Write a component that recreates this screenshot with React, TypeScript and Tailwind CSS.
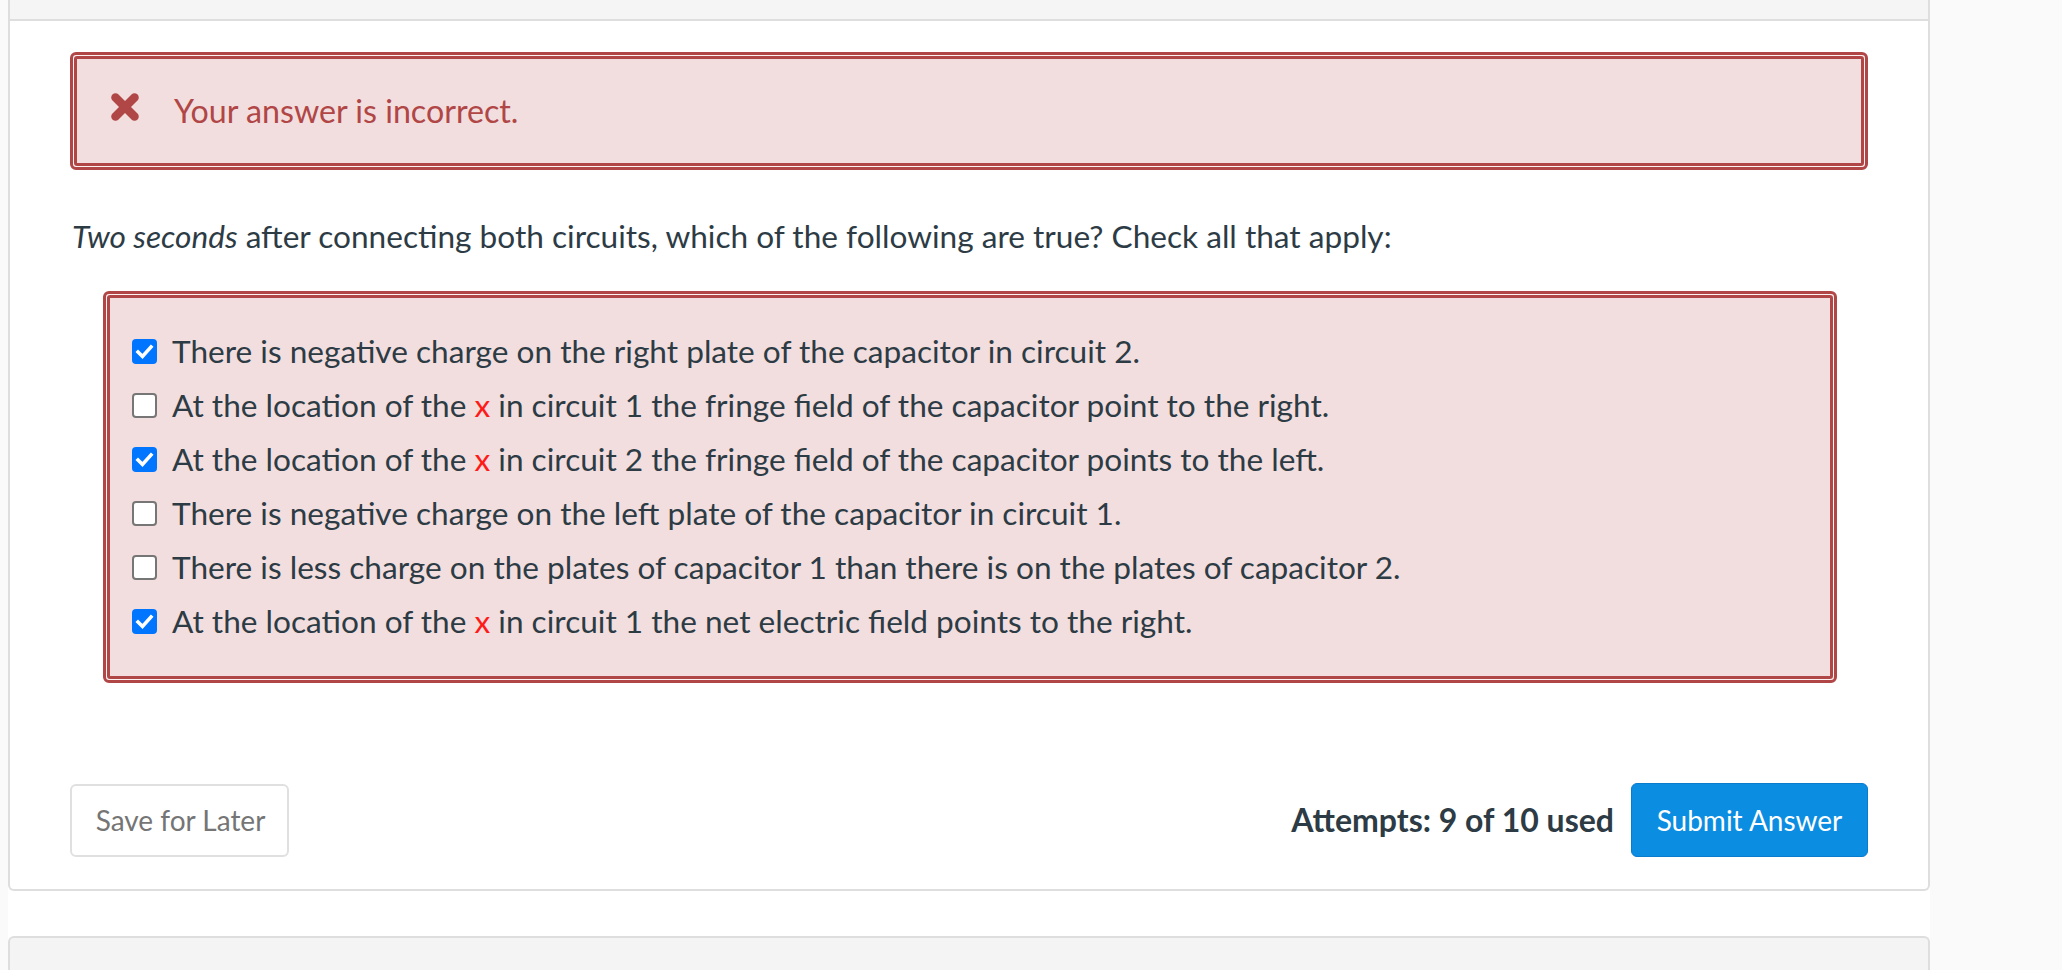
import React from "react";

const RedX = () => <span className="text-[#ff1a1a]">x</span>;

const options: { checked: boolean; content: React.ReactNode }[] = [
  { checked: true, content: <>There is negative charge on the right plate of the capacitor in circuit 2.</> },
  { checked: false, content: <>At the location of the <RedX /> in circuit 1 the fringe field of the capacitor point to the right.</> },
  { checked: true, content: <>At the location of the <RedX /> in circuit 2 the fringe field of the capacitor points to the left.</> },
  { checked: false, content: <>There is negative charge on the left plate of the capacitor in circuit 1.</> },
  { checked: false, content: <>There is less charge on the plates of capacitor 1 than there is on the plates of capacitor 2.</> },
  { checked: true, content: <>At the location of the <RedX /> in circuit 1 the net electric field points to the right.</> },
];

function Checkbox({ checked }: { checked: boolean }) {
  if (checked) {
    return (
      <span className="flex h-[25px] w-[25px] shrink-0 items-center justify-center rounded-[4px] bg-[#0075ff]">
        <svg width="25" height="25" viewBox="0 0 25 25">
          <polyline points="6,13 10.5,17.5 19,8" fill="none" stroke="#ffffff" strokeWidth="3.6" strokeLinecap="square" />
        </svg>
      </span>
    );
  }
  return <span className="block h-[25px] w-[25px] shrink-0 rounded-[4px] border-2 border-[#767676] bg-white" />;
}

export default function App() {
  return (
    <div className="h-[970px] w-full overflow-hidden bg-[#fafafa] [font-family:Lato,sans-serif] text-[#2d3b45]">
      <div className="ml-[8px] h-full w-[1922px] bg-white">
        {/* main card */}
        <div className="rounded-b-[6px] border-2 border-t-0 border-[#dedede]">
          <div className="h-[21px] border-b-2 border-[#dedede] bg-[#f5f5f5]" />
          <div className="px-[60px] pt-[31px] pb-[32px]">
            {/* alert */}
            <div className="rounded-[6px] border-[3px] border-[#b04646] bg-[#fbf1f1] p-[1px]">
              <div className="flex h-[110px] items-center rounded-[3px] border-[3px] border-[#b04646] bg-[#f2dede] pl-[33px]">
                <svg width="30" height="30" viewBox="0 0 30 30" className="mb-[8px] shrink-0">
                  <line x1="5.5" y1="5.5" x2="24.5" y2="24.5" stroke="#b04646" strokeWidth="8.5" strokeLinecap="round" />
                  <line x1="24.5" y1="5.5" x2="5.5" y2="24.5" stroke="#b04646" strokeWidth="8.5" strokeLinecap="round" />
                </svg>
                <span className="ml-[34px] text-[32.2px] leading-[48px] text-[#b04646]">Your answer is incorrect.</span>
              </div>
            </div>

            {/* question */}
            <p className="mt-[45px] pl-[2px] text-[31.6px] leading-[43px]">
              <em>Two seconds</em> after connecting both circuits, which of the following are true? Check all that apply:
            </p>

            {/* options */}
            <div className="mt-[33px] ml-[33px] mr-[31px] rounded-[6px] border-[3px] border-[#b04646] bg-[#fbf1f1] p-[1px]">
              <div className="rounded-[3px] border-[3px] border-[#b04646] bg-[#f2dede] pl-[22px] pt-[26px] pb-[28px]">
                {options.map((o, i) => (
                  <div key={i} className="flex h-[54px] items-center">
                    <Checkbox checked={o.checked} />
                    <span className="ml-[15px] text-[31.6px] leading-[54px]">{o.content}</span>
                  </div>
                ))}
              </div>
            </div>

            {/* footer buttons */}
            <div className="mt-[100px] flex items-center">
              <button className="h-[73px] w-[219px] rounded-[6px] border-2 border-[#e0e0e0] bg-white pl-[2px] text-[28px] text-[#757575]">
                Save for Later
              </button>
              <div className="flex-1" />
              <span className="mr-[17px] text-[32px] font-bold text-[#2d3b45]">Attempts: 9 of 10 used</span>
              <button className="h-[74px] w-[237px] rounded-[6px] border border-[#0a7ccc] bg-[#0b8de2] text-[28px] text-white">
                Submit Answer
              </button>
            </div>
          </div>
        </div>

        {/* next card */}
        <div className="mt-[45px] h-[60px] rounded-t-[6px] border-2 border-b-0 border-[#dedede] bg-[#f4f4f4]" />
      </div>
    </div>
  );
}
